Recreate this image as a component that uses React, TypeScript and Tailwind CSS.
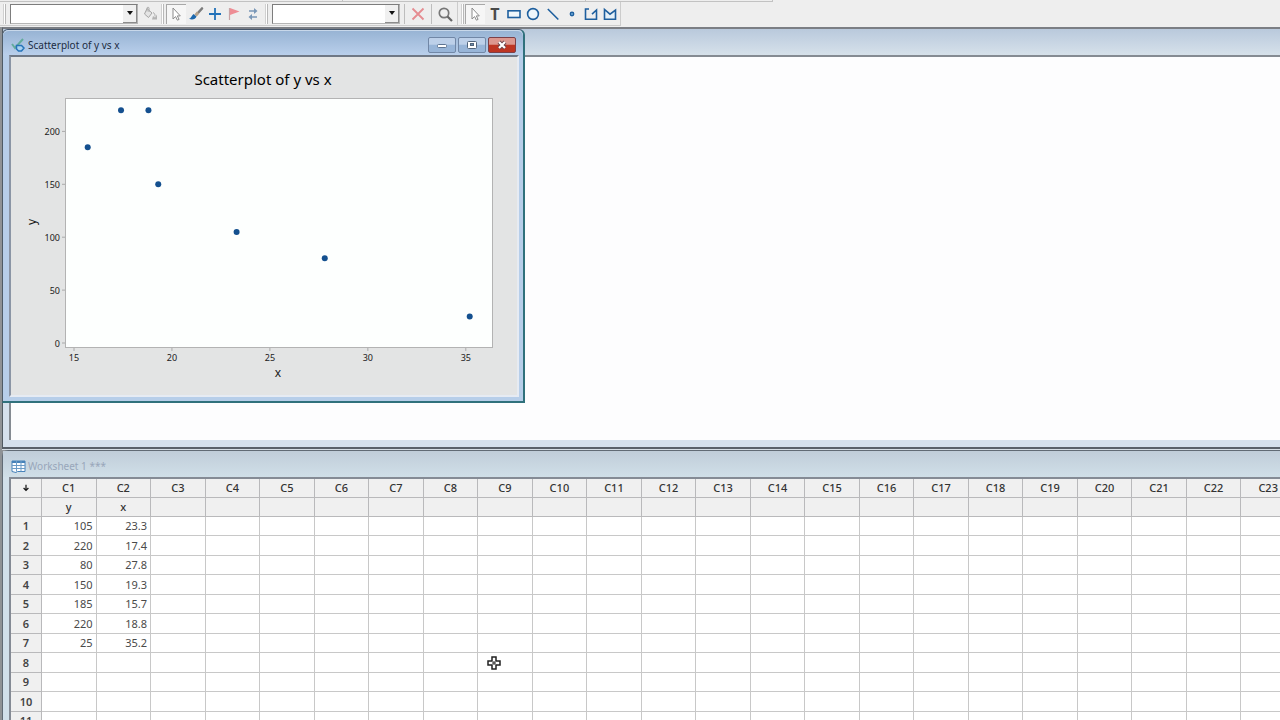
import type { ReactNode } from 'react'

interface Point {
  y: number
  x: number
}

const points: Point[] = [
  { y: 105, x: 23.3 },
  { y: 220, x: 17.4 },
  { y: 80, x: 27.8 },
  { y: 150, x: 19.3 },
  { y: 185, x: 15.7 },
  { y: 220, x: 18.8 },
  { y: 25, x: 35.2 }
]

const columns = Array.from({ length: 23 }, (_, i) => `C${i + 1}`)
const rows = Array.from({ length: 11 }, (_, i) => i + 1)

const xTicks = [15, 20, 25, 30, 35]
const yTicks = [0, 50, 100, 150, 200]

const scaleX = (v: number) => 63 + (v - 15) * 19.59
const scaleY = (v: number) => 286 - v * 1.058

function Icon({ children }: { children: ReactNode }) {
  return (
    <svg viewBox="0 0 16 16" className="h-4 w-4" fill="none" aria-hidden="true">
      {children}
    </svg>
  )
}

function ToolButton({
  label,
  active = false,
  children
}: {
  label: string
  active?: boolean
  children: ReactNode
}) {
  return (
    <button
      type="button"
      aria-label={label}
      aria-pressed={active}
      className={`flex h-5 flex-1 items-center justify-center ${
        active ? 'border-t border-l border-[#a8a8a8] bg-[#f6f6f6]' : ''
      }`}
    >
      {children}
    </button>
  )
}

function Combo({ label }: { label: string }) {
  return (
    <div className="relative h-5 w-32 border border-[#b5b5b5] border-t-[#7d7d7d] border-l-[#7d7d7d] bg-white">
      <select aria-label={label} className="h-full w-full appearance-none bg-transparent" />
      <span className="pointer-events-none absolute top-0 right-0 flex h-full w-3.5 items-center justify-center border-r border-b border-[#8c8c8c] bg-[#f0f0f0]">
        <svg viewBox="0 0 6 4" className="h-1 w-1.5" aria-hidden="true">
          <path d="M0 0h6L3 4z" fill="#111" />
        </svg>
      </span>
    </div>
  )
}

function Separator() {
  return <div className="h-5 w-px bg-[#bdbdbd]" />
}

function Grip() {
  return <div className="h-5 w-[3px] border-r border-l border-r-[#b8b8b8] border-l-[#d0d0d0] bg-white" />
}

function PointerIcon() {
  return (
    <Icon>
      <path d="M4 2v11l2.6-2.4 1.8 3.6 1.7-.8-1.8-3.5h3z" fill="#fff" stroke="#8b8b8b" />
    </Icon>
  )
}

function Toolbar() {
  return (
    <header className="flex h-[27px] shrink-0 flex-col bg-[#eeeeee]">
      <div className="flex h-0.5 w-[773px] border-r border-b border-[#c2c2c2]">
        <div className="w-[343px] border-r border-[#c2c2c2]" />
        <div className="w-[243px] border-r border-[#c2c2c2]" />
      </div>
      <div className="flex">
        <div className="flex h-6 items-center border-r border-b border-[#cccccc] pl-[3px]">
          <Grip />
          <div className="ml-1">
            <Combo label="Selected item" />
          </div>
          <button type="button" aria-label="Edit item" className="ml-[3px] flex h-5 w-5 items-center justify-center">
            <Icon>
              <path d="M4 2.5l5 4.5-3.5 4.5-4-3.5z" fill="#e4e4e4" stroke="#a5a5a5" />
              <path d="M4 5.5V2c0-1 2-1 2 0v4M10 6.5c2 1 2 2 2 4" stroke="#aaa" />
              <path d="M9 13.5l1-3.5 2 1.5 2-3v5z" fill="#b4b4b4" />
            </Icon>
          </button>
          <Grip />
          <div className="ml-0.5 flex w-[97px]">
            <ToolButton label="Select" active>
              <PointerIcon />
            </ToolButton>
            <ToolButton label="Brush">
              <Icon>
                <path d="M14 2.500L9 8" stroke="#7c7c7c" strokeWidth="2.600" strokeLinecap="round" />
                <path d="M10 6.500L7.500 9.500" stroke="#b5a28b" strokeWidth="3" />
                <path d="M5.500 8l3 2.500C7.500 13.500 4 14 1 12.800c2-.4 2.400-2.800 4.500-4.800z" fill="#1b67ac" />
              </Icon>
            </ToolButton>
            <ToolButton label="Crosshairs">
              <Icon>
                <path d="M8 2v12M2 8h12" stroke="#2372b9" strokeWidth="1.800" />
              </Icon>
            </ToolButton>
            <ToolButton label="Plant flag">
              <Icon>
                <path d="M3.500 2v12" stroke="#c9a4a6" strokeWidth="1.200" />
                <path d="M4 2l9.500 3.500L4 9z" fill="#ee8d95" />
              </Icon>
            </ToolButton>
            <ToolButton label="Swap">
              <Icon>
                <path d="M4 5h6M6 11h6" stroke="#7997b7" strokeWidth="1.500" />
                <path d="M9 2l3.500 3L9 8zM7 8l-3.500 3L7 14z" fill="#7997b7" />
              </Icon>
            </ToolButton>
          </div>
          <div className="mr-1 ml-0.5">
            <Grip />
          </div>
          <Combo label="Graph item" />
          <div className="ml-1">
            <Separator />
          </div>
          <div className="flex w-[26px]">
            <ToolButton label="Delete">
              <Icon>
                <path d="M2.500 2.500l11 11M13.500 2.500l-11 11" stroke="#e58c91" strokeWidth="1.800" />
              </Icon>
            </ToolButton>
          </div>
          <Separator />
          <div className="flex w-[25px]">
            <ToolButton label="Zoom">
              <Icon>
                <circle cx="7" cy="7" r="4.700" stroke="#777" strokeWidth="1.700" />
                <path d="M10.500 10.500L15 15" stroke="#666" strokeWidth="2.200" />
              </Icon>
            </ToolButton>
          </div>
        </div>
        <div className="flex h-6 items-center border-r border-b border-[#cccccc] pl-[3px]">
          <Grip />
          <div className="ml-px flex w-[155px]">
            <ToolButton label="Select object" active>
              <PointerIcon />
            </ToolButton>
            <ToolButton label="Text">
              <span className="font-['Open_Sans','Noto_Sans',sans-serif] text-base leading-5 font-bold text-[#4a4a4a]">T</span>
            </ToolButton>
            <ToolButton label="Rectangle">
              <Icon>
                <rect x="2" y="4.800" width="12" height="6.700" fill="#eef6fb" stroke="#1e5f9e" strokeWidth="1.600" />
              </Icon>
            </ToolButton>
            <ToolButton label="Ellipse">
              <Icon>
                <circle cx="8" cy="8" r="5.400" fill="#eef6fb" stroke="#1e5f9e" strokeWidth="1.600" />
              </Icon>
            </ToolButton>
            <ToolButton label="Line">
              <Icon>
                <path d="M2.800 3l10.500 10.500" stroke="#1e5f9e" strokeWidth="1.600" />
              </Icon>
            </ToolButton>
            <ToolButton label="Marker">
              <Icon>
                <circle cx="8" cy="8" r="1.700" fill="#6fa9d6" stroke="#1e5f9e" strokeWidth="1.400" />
              </Icon>
            </ToolButton>
            <ToolButton label="Polyline">
              <Icon>
                <path d="M6 3H2.500v10.300h11V4L9 8.200" stroke="#1e5f9e" strokeWidth="1.600" />
              </Icon>
            </ToolButton>
            <ToolButton label="Polygon">
              <Icon>
                <path d="M2.500 3.500v9.800h11V4L8 8.200z" fill="#e4f0f8" stroke="#1e5f9e" strokeWidth="1.600" />
              </Icon>
            </ToolButton>
          </div>
        </div>
      </div>
    </header>
  )
}

function Scatterplot() {
  return (
    <svg
      viewBox="0 0 506 338"
      role="img"
      aria-label="Scatterplot of y vs x"
      className="block h-full w-full font-['Noto_Sans','Open_Sans',sans-serif]"
      fill="#1a1a1a"
    >
      <text x="252" y="28" textAnchor="middle" fontSize="15" fill="#000">
        Scatterplot of y vs x
      </text>
      <rect x="54.500" y="41.500" width="427" height="249" fill="#fdfffe" stroke="#b3b3b3" />
      {yTicks.map((t) => (
        <g key={t}>
          <path d={`M51 ${scaleY(t)}h3`} stroke="#aaa" />
          <text x="49" y={scaleY(t) + 4} textAnchor="end" fontSize="9">
            {t}
          </text>
        </g>
      ))}
      {xTicks.map((t) => (
        <g key={t}>
          <path d={`M${scaleX(t)} 291v3`} stroke="#aaa" />
          <text x={scaleX(t)} y="304" textAnchor="middle" fontSize="9">
            {t}
          </text>
        </g>
      ))}
      <text x="267" y="320" textAnchor="middle" fontSize="12">
        x
      </text>
      <text transform="translate(25 165) rotate(-90)" textAnchor="middle" fontSize="12">
        y
      </text>
      {points.map((p) => (
        <circle key={p.x} cx={scaleX(p.x)} cy={scaleY(p.y)} r="3" fill="#14508f" />
      ))}
    </svg>
  )
}

function WindowButton({
  label,
  danger = false,
  children
}: {
  label: string
  danger?: boolean
  children: ReactNode
}) {
  return (
    <button
      type="button"
      aria-label={label}
      className={`flex h-4 w-7 items-center justify-center rounded-xs border ${
        danger
          ? 'border-[#7c4048] bg-linear-to-b from-[#dc978f] from-45% to-[#bd3523] to-50%'
          : 'border-[#7187a6] bg-linear-to-b from-[#bdd0e9] from-45% to-[#98b5d8] to-50%'
      }`}
    >
      <svg viewBox="0 0 12 10" className="h-2.5 w-3" fill="none" aria-hidden="true">
        {children}
      </svg>
    </button>
  )
}

function GraphWindow() {
  return (
    <section className="absolute top-[29px] left-0.5 flex h-[374px] w-[523px] flex-col rounded-t-md border border-r-2 border-b-2 border-[#30717c] border-t-[#45566c] border-l-[#4e5b67] bg-[#b7cee9]">
      <div className="flex h-[25px] items-center rounded-t-md border-t border-[#c8d8ea] bg-linear-to-b from-[#98b4d4] to-[#b9cfeb] pt-1 pr-[7px] pl-2">
        <svg viewBox="0 0 14 14" className="h-3.5 w-3.5" fill="none" aria-hidden="true">
          <path d="M1 6l3 4 8-9" stroke="#62ab9b" strokeWidth="2" />
          <path d="M5.500 7.500h5l2.500 2.500-2.500 3h-3l-2-2z" fill="#a9d1f0" stroke="#2674b9" strokeWidth="1.500" />
        </svg>
        <h2 className="ml-[3px] flex-1 font-['Noto_Sans','Open_Sans',sans-serif] text-[10px] leading-4 text-[#1c2c42]">
          Scatterplot of y vs x
        </h2>
        <div className="flex gap-0.5">
          <WindowButton label="Minimize">
            <rect x="1.500" y="4.500" width="9" height="3" rx="1" fill="#fff" stroke="#5e7491" />
          </WindowButton>
          <WindowButton label="Maximize">
            <rect x="1.500" y="1.500" width="9" height="7" rx="1" fill="#fff" stroke="#52647b" />
            <rect x="4.500" y="3.500" width="3" height="2" fill="#6d8cab" stroke="#52647b" />
          </WindowButton>
          <WindowButton label="Close" danger>
            <path d="M3 2l6 6M9 2L3 8" stroke="#69434b" strokeWidth="4" />
            <path d="M3 2l6 6M9 2L3 8" stroke="#fff" strokeWidth="2.200" />
          </WindowButton>
        </div>
      </div>
      <div className="mr-1 mb-1 ml-1.5 min-h-0 flex-1 border-2 border-[#e6ebf3] border-t-[#6f7885] border-l-[#8b95a5] bg-[#e3e4e4]">
        <Scatterplot />
      </div>
    </section>
  )
}

function SessionWindow() {
  return (
    <section className="flex h-[422px] shrink-0 flex-col border-t-2 border-b-2 border-l border-t-[#7b7e84] border-b-[#596069] border-l-[#515a62] bg-[#d5e0ec]">
      <div className="h-[26px] bg-linear-to-b from-[#b9c9dc] to-[#d6e1ea]" />
      <div className="ml-1.5 flex-1 border-t-2 border-l-2 border-[#858b92] bg-[#fdfdfe]" />
      <div className="h-[7px]" />
    </section>
  )
}

function WorksheetWindow() {
  return (
    <section className="flex min-h-0 flex-1 flex-col rounded-tl-md border-t border-l border-[#616b75] bg-[#d2e0ea]">
      <div className="flex h-[26px] items-center bg-linear-to-b from-[#c0cdd9] to-[#d0dfe8] pt-1 pl-2">
        <svg viewBox="0 0 15 13" className="h-[13px] w-[15px]" fill="none" aria-hidden="true">
          <path d="M1 1h13v10.500H6.500L5 12.500 1 11.500z" fill="#fafcff" stroke="#4682b9" />
          <path d="M1 2h13" stroke="#4682b9" strokeWidth="2" />
          <path d="M1 5.500h13M1 8.500h13M5.500 1v10.500M10 1v10.500" stroke="#6b9bc6" />
        </svg>
        <h2 className="ml-0.5 font-['Noto_Sans','Open_Sans',sans-serif] text-[10px] leading-4 text-[#98a6ba]">
          Worksheet 1 ***
        </h2>
      </div>
      <div className="ml-1.5 min-h-0 flex-1 overflow-hidden border-t-2 border-l-2 border-[#858b95] bg-white">
        <table className="w-[calc(100%+16px)] table-fixed border-separate border-spacing-0 font-['Noto_Sans','Open_Sans',sans-serif] text-[11px] leading-[18px] text-[#4a4a4a] [&_td]:border-r [&_td]:border-b [&_td]:border-[#c8c8c8] [&_td]:p-0 [&_th]:border-r [&_th]:border-b [&_th]:border-[#b9b9bb] [&_th]:bg-[#f0f0f0] [&_th]:p-0 [&_th]:font-medium">
          <thead className="text-[#333]">
            <tr className="h-[19px]">
              <th scope="col" className="w-[31px]">
                <svg viewBox="0 0 8 10" className="mx-auto h-2 w-2" fill="none" aria-label="Data entry direction">
                  <path d="M4 1v7M1 5l3 3 3-3" stroke="#111" strokeWidth="1.500" />
                </svg>
              </th>
              {columns.map((c) => (
                <th key={c} scope="col">
                  {c}
                </th>
              ))}
            </tr>
            <tr className="h-[19px]">
              <th />
              {columns.map((c, i) => (
                <th key={c} scope="col">
                  {['y', 'x'][i]}
                </th>
              ))}
            </tr>
          </thead>
          <tbody>
            {rows.map((r) => {
              const p = points[r - 1]
              return (
                <tr key={r} className="h-[19px] even:h-5">
                  <th scope="row" className="font-semibold! text-[#444]">
                    {r}
                  </th>
                  {columns.map((c, i) => (
                    <td key={c} className="text-right">
                      {p && i === 0 && <span className="pr-[3px]">{p.y}</span>}
                      {p && i === 1 && <span className="pr-[3px]">{p.x}</span>}
                    </td>
                  ))}
                </tr>
              )
            })}
          </tbody>
        </table>
      </div>
    </section>
  )
}

export default function App() {
  return (
    <div className="relative flex h-screen flex-col overflow-hidden bg-[#eeeeee]">
      <Toolbar />
      <main className="flex min-h-0 flex-1 flex-col bg-[#8f9295] pl-0.5">
        <SessionWindow />
        <div className="h-px shrink-0 bg-[#d5dde4]" />
        <WorksheetWindow />
      </main>
      <GraphWindow />

      {/* Cell cursor */}
      <svg viewBox="0 0 14 14" className="absolute top-[656px] left-[487px] h-3.5 w-3.5" aria-hidden="true">
        <path d="M5 1h4v4h4v4H9v4H5V9H1V5h4z" fill="#fff" stroke="#222" strokeWidth="1.500" />
        <path d="M7 5v4M5 7h4" stroke="#222" />
      </svg>
    </div>
  )
}
